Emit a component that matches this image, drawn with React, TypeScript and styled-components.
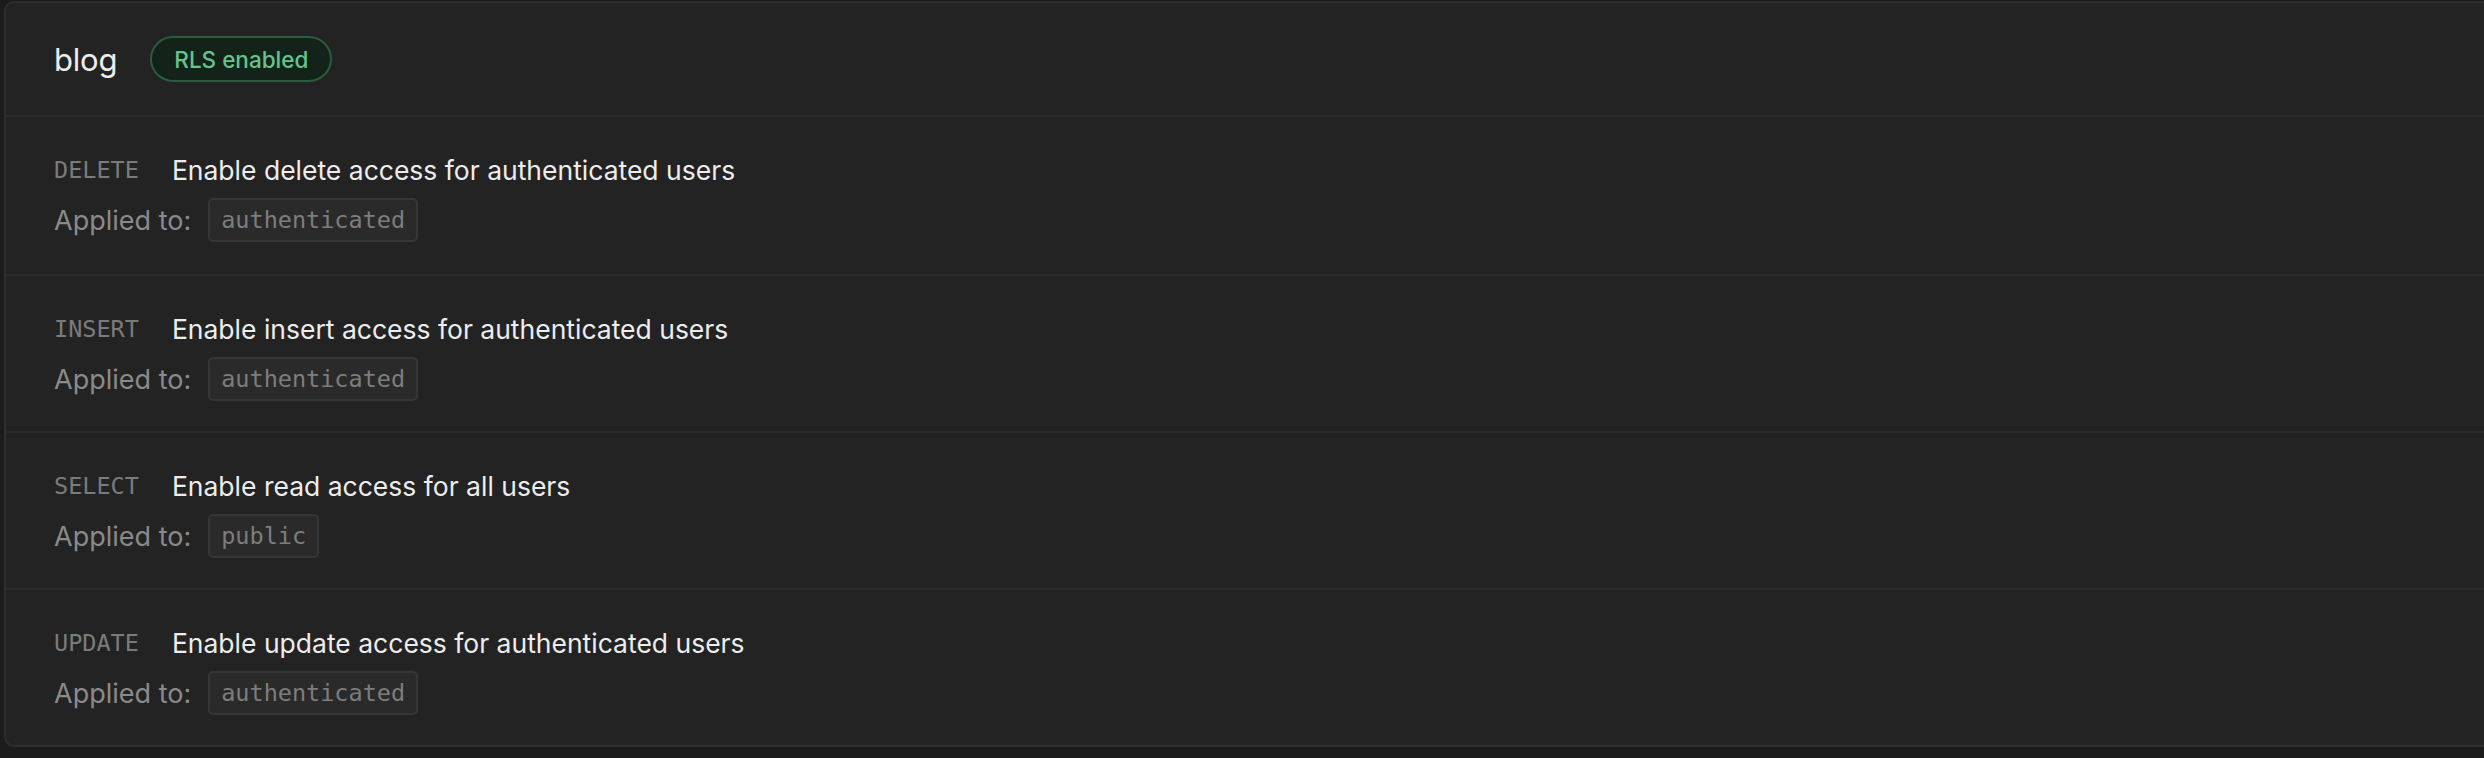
import React from "react";
import styled, { createGlobalStyle } from "styled-components";

const GlobalStyle = createGlobalStyle`
  html, body {
    margin: 0;
    padding: 0;
    background: #1c1c1c;
    overflow: hidden;
  }
  body {
    font-family: Inter, "Noto Sans", sans-serif;
    -webkit-font-smoothing: antialiased;
  }
`;

interface Policy {
  command: string;
  name: string;
  roles: string[];
}

const policies: Policy[] = [
  { command: "DELETE", name: "Enable delete access for authenticated users", roles: ["authenticated"] },
  { command: "INSERT", name: "Enable insert access for authenticated users", roles: ["authenticated"] },
  { command: "SELECT", name: "Enable read access for all users", roles: ["public"] },
  { command: "UPDATE", name: "Enable update access for authenticated users", roles: ["authenticated"] },
];

const Page = styled.div`
  padding: 1px 0 0 4px;
  width: 2520px;
`;

const Card = styled.section`
  background: #232323;
  border: 2px solid #2e2e2e;
  border-radius: 10px;
  overflow: hidden;
`;

const Header = styled.header`
  display: flex;
  align-items: center;
  gap: 33px;
  height: 112px;
  padding: 0 48px;
  border-bottom: 2px solid #2a2a2a;
`;

const TableName = styled.h2`
  margin: 0;
  font-size: 31px;
  font-weight: 400;
  color: #ededed;
  letter-spacing: -0.2px;
`;

const Badge = styled.span`
  display: inline-flex;
  align-items: center;
  height: 42px;
  padding: 0 22px;
  border-radius: 999px;
  border: 2px solid #2a5c3d;
  background: #13231a;
  color: #66c38c;
  font-size: 22.5px;
  font-weight: 500;
`;

const Row = styled.div`
  display: flex;
  flex-direction: column;
  gap: 10px;
  height: 157px;
  box-sizing: border-box;
  padding: 35px 48px 0;
  & + & {
    border-top: 2px solid #2a2a2a;
  }
`;

const TitleLine = styled.div`
  display: flex;
  align-items: center;
  gap: 33px;
  height: 36px;
`;

const Command = styled.span`
  font-family: "DejaVu Sans Mono", "Liberation Mono", monospace;
  font-size: 23.5px;
  color: #7b7b7b;
`;

const PolicyName = styled.span`
  font-size: 26.5px;
  color: #ededed;
`;

const AppliedLine = styled.div`
  display: flex;
  align-items: center;
  gap: 17px;
`;

const AppliedLabel = styled.span`
  font-size: 27px;
  color: #8a8a8a;
`;

const RoleChip = styled.code`
  display: inline-flex;
  align-items: center;
  height: 40px;
  padding: 0 11px;
  border-radius: 5px;
  border: 2px solid #363636;
  background: #2a2a2a;
  font-family: "DejaVu Sans Mono", "Liberation Mono", monospace;
  font-size: 23.5px;
  color: #7d7d7d;
`;

const App: React.FC = () => {
  return (
    <>
      <GlobalStyle />
      <Page>
        <Card>
          <Header>
            <TableName>blog</TableName>
            <Badge>RLS enabled</Badge>
          </Header>
          {policies.map((p) => (
            <Row key={p.command}>
              <TitleLine>
                <Command>{p.command}</Command>
                <PolicyName>{p.name}</PolicyName>
              </TitleLine>
              <AppliedLine>
                <AppliedLabel>Applied to:</AppliedLabel>
                {p.roles.map((r) => (
                  <RoleChip key={r}>{r}</RoleChip>
                ))}
              </AppliedLine>
            </Row>
          ))}
        </Card>
      </Page>
    </>
  );
};

export default App;
